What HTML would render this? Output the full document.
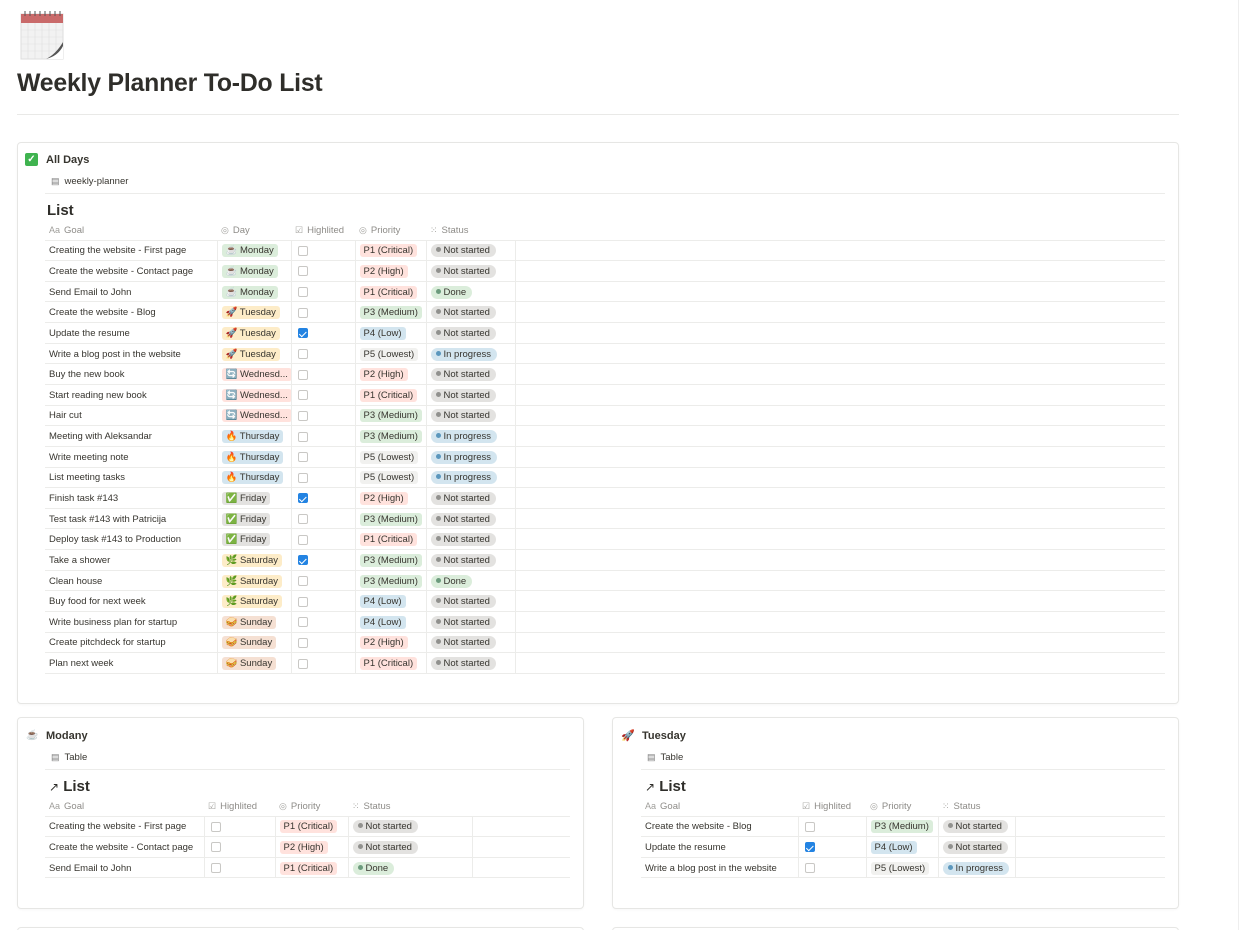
<!DOCTYPE html>
<html><head><meta charset="utf-8">
<style>
*{box-sizing:border-box;margin:0;padding:0}
html,body{width:1240px;height:930px;overflow:hidden}
body{background:#fff;font-family:"Liberation Sans",sans-serif;color:#37352f;position:relative}
.abs{position:absolute}
.title{left:17px;top:70px;font-size:24.8px;font-weight:bold;color:#2f2e2a;letter-spacing:-0.2px}
.hr{left:17px;top:114px;width:1162px;height:1px;background:#e9e9e7}
.card{position:absolute;border:1px solid #e6e6e4;border-radius:4px;box-shadow:0 1px 2px rgba(0,0,0,.03)}
.ct{position:absolute;font-size:11px;font-weight:bold;color:#37352f}
.cv{position:absolute;font-size:9.5px;color:#37352f;display:flex;align-items:center;gap:5px}
.ln{position:absolute;height:1px;background:#ececea}
.lt{position:absolute;font-size:15px;font-weight:bold;color:#2f2e2a}
table{position:absolute;border-collapse:collapse;font-size:9.5px;table-layout:fixed}
td{height:20.65px;border-bottom:1px solid #ececea;border-right:1px solid #ececea;padding:1px 4px 0;white-space:nowrap;overflow:hidden;vertical-align:middle}
td:last-child{border-right:none}
tr.h td{color:#8e8c88;border-bottom:1px solid #ececea;height:20px}
tr.h td{border-right:none}
.tg{display:inline-block;padding:1px 4px;border-radius:3px;line-height:11px}
.st{display:inline-block;padding:1px 6px 1px 5px;border-radius:8px;line-height:11px}
.dot{display:inline-block;width:5px;height:5px;border-radius:50%;margin-right:3px;vertical-align:1px}
.cb{display:inline-block;width:10px;height:10px;border:1px solid #c9c8c5;border-radius:2px;vertical-align:middle;margin-left:2px}
.cb.on{background:#2383e2;border-color:#2383e2;position:relative}
.cb.on:after{content:"";position:absolute;left:2.5px;top:0.5px;width:3px;height:5.5px;border:solid #fff;border-width:0 1.5px 1.5px 0;transform:rotate(45deg)}
.hi{font-size:9px;color:#a09f9b;margin-right:4px}
</style></head><body>
<svg class="abs" style="left:20px;top:10px" width="44" height="50" viewBox="0 0 44 50">
<rect x="1" y="4" width="42" height="45" fill="#f2f2f2" stroke="#ddd"/>
<rect x="1" y="4" width="42" height="9" fill="#c96a6a"/>
<g stroke="#555" stroke-width="1"><line x1="5" y1="1" x2="5" y2="6"/><line x1="10" y1="1" x2="10" y2="6"/><line x1="15" y1="1" x2="15" y2="6"/><line x1="20" y1="1" x2="20" y2="6"/><line x1="25" y1="1" x2="25" y2="6"/><line x1="30" y1="1" x2="30" y2="6"/><line x1="35" y1="1" x2="35" y2="6"/><line x1="40" y1="1" x2="40" y2="6"/></g>
<g stroke="#e0e0e0" stroke-width=".6"><line x1="1" y1="20" x2="43" y2="20"/><line x1="1" y1="27" x2="43" y2="27"/><line x1="1" y1="34" x2="43" y2="34"/><line x1="1" y1="41" x2="43" y2="41"/><line x1="8" y1="13" x2="8" y2="49"/><line x1="15" y1="13" x2="15" y2="49"/><line x1="22" y1="13" x2="22" y2="49"/><line x1="29" y1="13" x2="29" y2="49"/><line x1="36" y1="13" x2="36" y2="49"/></g>
<path d="M43 32 L43 49 L26 49 Q36 44 43 32Z" fill="#fff"/><path d="M43 32 Q36 44 26 49 Q38 46 43 36Z" fill="#555"/>
</svg>
<div class="abs title">Weekly Planner To-Do List</div>
<div class="abs hr"></div>

<div class="card" style="left:17px;top:142px;width:1162px;height:562px"></div>
<div class="abs" style="left:25px;top:153px;width:13px;height:13px;background:#3fb34f;border-radius:2px;color:#fff;font-size:10px;line-height:13px;text-align:center;font-weight:bold">✓</div>
<div class="ct" style="left:46px;top:154px">All Days</div>
<div class="cv" style="left:51px;top:176px"><span style="font-size:9px;color:#777">▤</span>weekly-planner</div>
<div class="ln" style="left:45px;top:193px;width:1120px"></div>
<div class="lt" style="left:47px;top:202px">List</div>
<table id="t1" style="left:45px;top:220px;width:1120px"></table>

<div class="card" style="left:17px;top:717px;width:567px;height:192px"></div>
<div class="abs" style="left:26px;top:730px;font-size:10px">☕</div>
<div class="ct" style="left:46px;top:730px">Modany</div>
<div class="cv" style="left:51px;top:752px"><span style="font-size:9px;color:#777">▤</span>Table</div>
<div class="ln" style="left:45px;top:769px;width:525px"></div>
<div class="lt" style="left:49px;top:778px"><span style="font-weight:normal;font-size:12px">↗</span> List</div>
<table id="t2" style="left:45px;top:796px;width:525px"></table>

<div class="card" style="left:612px;top:717px;width:567px;height:192px"></div>
<div class="abs" style="left:621px;top:729px;font-size:11px">🚀</div>
<div class="ct" style="left:642px;top:730px">Tuesday</div>
<div class="cv" style="left:647px;top:752px"><span style="font-size:9px;color:#777">▤</span>Table</div>
<div class="ln" style="left:641px;top:769px;width:524px"></div>
<div class="lt" style="left:645px;top:778px"><span style="font-weight:normal;font-size:12px">↗</span> List</div>
<table id="t3" style="left:641px;top:796px;width:524px"></table>

<div class="card" style="left:17px;top:927px;width:567px;height:20px"></div>
<div class="card" style="left:612px;top:927px;width:567px;height:20px"></div>
<div class="abs" style="left:1238px;top:0;width:1px;height:930px;background:#eee"></div>

<script>
const D={Mon:['☕ Monday','#dbeddb'],Tue:['🚀 Tuesday','#fdecc8'],Wed:['🔄 Wednesd...','#ffe2dd'],Thu:['🔥 Thursday','#d3e5ef'],Fri:['✅ Friday','#e3e2e0'],Sat:['🌿 Saturday','#fdecc8'],Sun:['🥪 Sunday','#f5e0d3']};
const P={1:['P1 (Critical)','#ffe2dd'],2:['P2 (High)','#ffe2dd'],3:['P3 (Medium)','#dbeddb'],4:['P4 (Low)','#d3e5ef'],5:['P5 (Lowest)','#f1f1ef']};
const S={n:['Not started','#e3e2e0','#91918e'],d:['Done','#dbeddb','#6c9b7d'],i:['In progress','#d3e5ef','#5b97bd']};
const R=[["Creating the website - First page","Mon",0,1,"n"],["Create the website - Contact page","Mon",0,2,"n"],["Send Email to John","Mon",0,1,"d"],["Create the website - Blog","Tue",0,3,"n"],["Update the resume","Tue",1,4,"n"],["Write a blog post in the website","Tue",0,5,"i"],["Buy the new book","Wed",0,2,"n"],["Start reading new book","Wed",0,1,"n"],["Hair cut","Wed",0,3,"n"],["Meeting with Aleksandar","Thu",0,3,"i"],["Write meeting note","Thu",0,5,"i"],["List meeting tasks","Thu",0,5,"i"],["Finish task #143","Fri",1,2,"n"],["Test task #143 with Patricija","Fri",0,3,"n"],["Deploy task #143 to Production","Fri",0,1,"n"],["Take a shower","Sat",1,3,"n"],["Clean house","Sat",0,3,"d"],["Buy food for next week","Sat",0,4,"n"],["Write business plan for startup","Sun",0,4,"n"],["Create pitchdeck for startup","Sun",0,2,"n"],["Plan next week","Sun",0,1,"n"]];
const ic={g:'<span class="hi">Aa</span>',s:'<span class="hi">◎</span>',c:'<span class="hi">☑</span>',t:'<span class="hi">⁙</span>'};
function cells(r,day){let h='<td>'+r[0]+'</td>';if(day)h+='<td><span class="tg" style="background:'+D[r[1]][1]+'">'+D[r[1]][0]+'</span></td>';
h+='<td><span class="cb'+(r[2]?' on':'')+'"></span></td><td><span class="tg" style="background:'+P[r[3]][1]+'">'+P[r[3]][0]+'</span></td>';
const s=S[r[4]];h+='<td><span class="st" style="background:'+s[1]+'"><span class="dot" style="background:'+s[2]+'"></span>'+s[0]+'</span></td><td></td>';return h;}
function build(id,rows,day,w){let h='<colgroup>'+w.map(x=>'<col style="width:'+x+'px">').join('')+'<col></colgroup>';
h+='<tr class="h"><td>'+ic.g+'Goal</td>'+(day?'<td>'+ic.s+'Day</td>':'')+'<td>'+ic.c+'Highlited</td><td>'+ic.s+'Priority</td><td>'+ic.t+'Status</td><td></td></tr>';
rows.forEach(r=>h+='<tr>'+cells(r,day)+'</tr>');document.getElementById(id).innerHTML=h;}
build('t1',R,true,[172,74,64,71,89]);
build('t2',R.slice(0,3),false,[159,71,73,124]);
build('t3',R.slice(3,6),false,[157,68,72,77]);
</script>
</body></html>
